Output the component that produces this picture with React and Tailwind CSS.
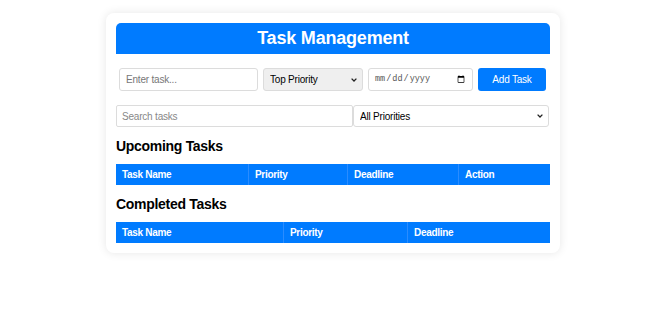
import React from 'react';

const font = "font-['Liberation_Sans',Arial,sans-serif]";

const Chevron = () => (
  <svg
    className="pointer-events-none absolute right-[6px] top-1/2 -translate-y-1/2"
    width="6"
    height="4"
    viewBox="0 0 6 4"
  >
    <path d="M0.6 0.6 L3 3 L5.4 0.6" fill="none" stroke="#222" strokeWidth="1.3" />
  </svg>
);

const Select = ({ options, className }) => (
  <div className="relative flex">
    <select
      defaultValue={options[0]}
      className={`block appearance-none rounded-[3px] border border-[#dcdcdc] px-[6px] text-[10px] tracking-[-0.2px] text-black outline-none ${className}`}
    >
      {options.map(o => (
        <option key={o}>{o}</option>
      ))}
    </select>
    <Chevron />
  </div>
);

const TableHead = ({ cols }) => (
  <div className="flex h-[21px] bg-[#007bff] text-white text-[10px] font-bold tracking-[-0.3px]">
    {cols.map(([label, w], i) => (
      <div
        key={label}
        className={`flex items-center pl-[6px] ${w} ${i < cols.length - 1 ? 'border-r border-[#2a8cff]' : ''}`}
      >
        {label}
      </div>
    ))}
  </div>
);

export default function App() {
  return (
    <div className={`w-[660px] h-[328px] bg-white ${font}`}>
      <div className="ml-[106px] mt-[13px] w-[454px] rounded-[8px] bg-white p-[10px] shadow-[0_0_10px_rgba(0,0,0,0.1)]">
        <div className="flex h-[31px] items-center justify-center rounded-t-[5px] bg-[#007bff] text-[18px] font-bold tracking-[-0.2px] text-white">
          Task Management
        </div>

        <div className="mt-[14px] flex items-center gap-[5px] pl-[3px]">
          <input
            placeholder="Enter task..."
            className="h-[23px] w-[139px] rounded-[3px] border border-[#dcdcdc] px-[6px] text-[10px] tracking-[-0.2px] placeholder:text-[#777] outline-none"
          />
          <Select
            options={['Top Priority', 'Middle Priority', 'Low Priority']}
            className="h-[23px] w-[100px] bg-[#efefef]"
          />
          <input
            type="date"
            className="h-[23px] w-[105px] rounded-[3px] border border-[#dcdcdc] px-[5px] font-['Liberation_Mono',monospace] text-[8.5px] text-[#555] outline-none"
          />
          <button className="h-[23px] w-[68px] rounded-[3px] bg-[#007bff] text-[10px] tracking-[-0.2px] text-white">
            Add Task
          </button>
        </div>

        <div className="mt-[14px] flex h-[22px]">
          <input
            placeholder="Search tasks"
            className="h-[22px] w-[237px] rounded-[2px] border border-[#dcdcdc] px-[5px] text-[10px] tracking-[-0.2px] placeholder:text-[#888] outline-none"
          />
          <Select
            options={['All Priorities', 'Top Priority', 'Middle Priority', 'Low Priority']}
            className="h-[22px] w-[196px] bg-white"
          />
        </div>

        <h2 className="mt-[9px] h-[20px] text-[14px] font-bold leading-[20px] tracking-[-0.3px] text-black">
          Upcoming Tasks
        </h2>
        <div className="mt-[8px]">
          <TableHead
            cols={[
              ['Task Name', 'w-[133px]'],
              ['Priority', 'w-[99px]'],
              ['Deadline', 'w-[111px]'],
              ['Action', 'flex-1'],
            ]}
          />
        </div>

        <h2 className="mt-[9px] h-[20px] text-[14px] font-bold leading-[20px] tracking-[-0.3px] text-black">
          Completed Tasks
        </h2>
        <div className="mt-[8px]">
          <TableHead
            cols={[
              ['Task Name', 'w-[168px]'],
              ['Priority', 'w-[124px]'],
              ['Deadline', 'flex-1'],
            ]}
          />
        </div>
      </div>
    </div>
  );
}
